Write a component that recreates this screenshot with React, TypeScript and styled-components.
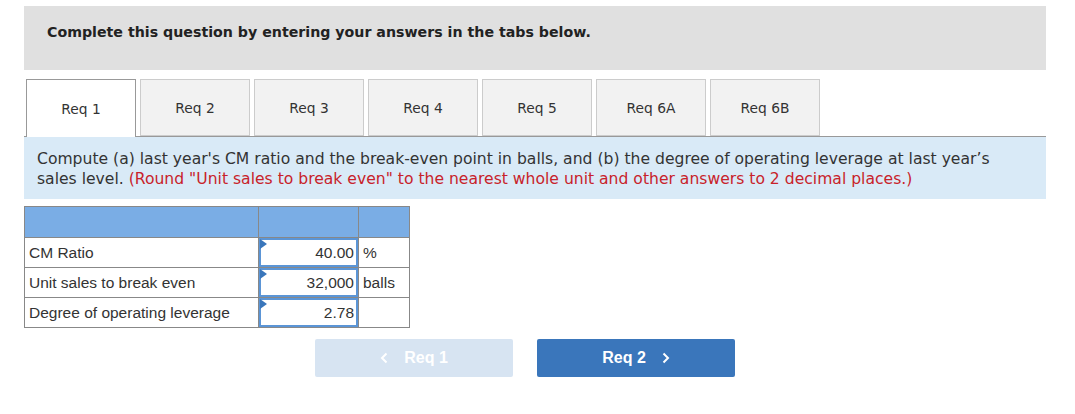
import React from 'react';
import styled, { createGlobalStyle } from 'styled-components';

const GlobalStyle = createGlobalStyle`
  body {
    margin: 0;
    background: #ffffff;
    font-family: "DejaVu Sans", Verdana, sans-serif;
  }
`;

const Page = styled.div`
  width: 1022px;
  padding: 6px 0 0 24px;
`;

const Banner = styled.div`
  height: 64px;
  background: #e0e0e0;
  box-sizing: border-box;
  padding: 18px 0 0 23px;
  font-size: 14.2px;
  font-weight: bold;
  color: #222;
`;

const TabBar = styled.div`
  display: flex;
  gap: 4px;
  margin-top: 9px;
  padding-left: 2px;
  border-bottom: 1px solid #999;
  height: 57px;
`;

const Tab = styled.div<{ $active?: boolean }>`
  width: 110px;
  height: ${(p) => (p.$active ? '58px' : '57px')};
  box-sizing: border-box;
  display: flex;
  align-items: center;
  justify-content: center;
  font-size: 13.8px;
  color: #333;
  background: ${(p) => (p.$active ? '#ffffff' : '#f2f2f2')};
  border: 1px solid ${(p) => (p.$active ? '#999' : '#ccc')};
  border-bottom: ${(p) => (p.$active ? 'none' : '1px solid #ccc')};
  position: relative;
  z-index: ${(p) => (p.$active ? 1 : 0)};
`;

const Info = styled.div`
  background: #d9eaf7;
  padding: 12px 13px 10px 13px;
  font-size: 15.6px;
  line-height: 20px;
  color: #333;
  white-space: nowrap;
`;

const Hint = styled.span`
  color: #c8222a;
`;

const Table = styled.table`
  margin-top: 7px;
  width: 382px;
  table-layout: fixed;
  border-collapse: collapse;
  font-family: "Liberation Sans", Arial, sans-serif;
  font-size: 15.5px;
  color: #333;
`;

const HeadCell = styled.th<{ $w: number }>`
  width: ${(p) => p.$w}px;
  height: 30px;
  padding: 0;
  background: #7aade5;
  border: 1px solid #888;
`;

const LabelCell = styled.td`
  height: 29px;
  padding: 0 0 0 4px;
  border: 1px solid #888;
  white-space: nowrap;
`;

const InputCell = styled.td`
  height: 29px;
  padding: 0;
  border: 1px solid #888;
`;

const InputBox = styled.div`
  height: 29px;
  box-sizing: border-box;
  border: 2px solid #5b95d6;
  background: #fff;
  display: flex;
  align-items: center;
  justify-content: flex-end;
  padding-right: 2px;
  position: relative;
`;

const Marker = styled.span`
  position: absolute;
  left: -1px;
  top: -1px;
  width: 0;
  height: 0;
  border-top: 5px solid transparent;
  border-bottom: 5px solid transparent;
  border-left: 7px solid #3a76bb;
`;

const UnitCell = styled.td`
  height: 29px;
  padding: 0 0 0 4px;
  border: 1px solid #888;
`;

const Nav = styled.div`
  display: flex;
  gap: 24px;
  margin: 11px 0 0 291px;
`;

const NavButton = styled.div<{ $disabled?: boolean }>`
  width: 198px;
  height: 38px;
  border-radius: 2px;
  background: ${(p) => (p.$disabled ? '#d7e4f2' : '#3a76bb')};
  color: #fff;
  display: flex;
  align-items: center;
  justify-content: center;
  gap: 16px;
  font-family: "Liberation Sans", Arial, sans-serif;
  font-weight: bold;
  font-size: 16px;
`;

const Chevron = ({ dir }: { dir: 'left' | 'right' }) => (
  <svg width="8" height="12" viewBox="0 0 8 12">
    <path
      d={dir === 'left' ? 'M6.5 1.5 L2 6 L6.5 10.5' : 'M1.5 1.5 L6 6 L1.5 10.5'}
      fill="none"
      stroke="#fff"
      strokeWidth="2"
    />
  </svg>
);

const tabs = ['Req 1', 'Req 2', 'Req 3', 'Req 4', 'Req 5', 'Req 6A', 'Req 6B'];

const rows = [
  { label: 'CM Ratio', value: '40.00', unit: '%' },
  { label: 'Unit sales to break even', value: '32,000', unit: 'balls' },
  { label: 'Degree of operating leverage', value: '2.78', unit: '' },
];

export default function App() {
  return (
    <>
      <GlobalStyle />
      <Page>
        <Banner>Complete this question by entering your answers in the tabs below.</Banner>
        <TabBar>
          {tabs.map((t, i) => (
            <Tab key={t} $active={i === 0}>
              {t}
            </Tab>
          ))}
        </TabBar>
        <Info>
          Compute (a) last year's CM ratio and the break-even point in balls, and (b) the degree of operating
          leverage at last year’s
          <br />
          sales level.{' '}
          <Hint>
            (Round "Unit sales to break even" to the nearest whole unit and other answers to 2 decimal places.)
          </Hint>
        </Info>
        <Table>
          <thead>
            <tr>
              <HeadCell $w={233} />
              <HeadCell $w={99} />
              <HeadCell $w={50} />
            </tr>
          </thead>
          <tbody>
            {rows.map((r) => (
              <tr key={r.label}>
                <LabelCell>{r.label}</LabelCell>
                <InputCell>
                  <InputBox>
                    <Marker />
                    {r.value}
                  </InputBox>
                </InputCell>
                <UnitCell>{r.unit}</UnitCell>
              </tr>
            ))}
          </tbody>
        </Table>
        <Nav>
          <NavButton $disabled>
            <Chevron dir="left" />
            Req 1
          </NavButton>
          <NavButton>
            Req 2
            <Chevron dir="right" />
          </NavButton>
        </Nav>
      </Page>
    </>
  );
}
